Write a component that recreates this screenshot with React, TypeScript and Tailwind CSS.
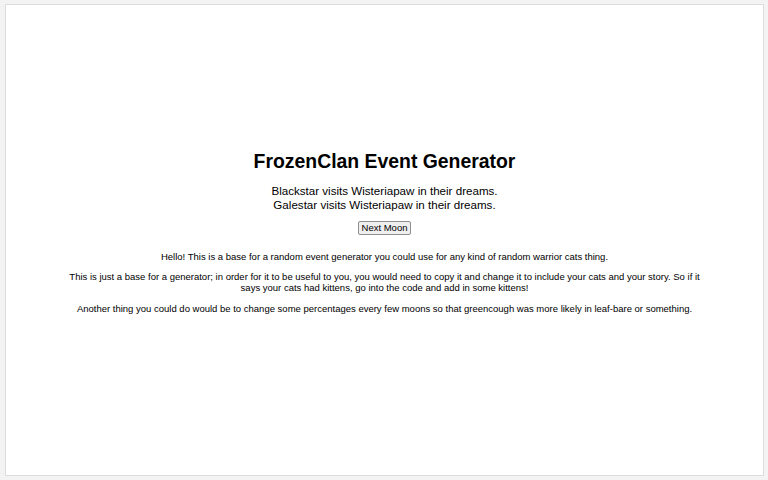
export default function App() {
  const events = [
    'Blackstar visits Wisteriapaw in their dreams.',
    'Galestar visits Wisteriapaw in their dreams.',
  ];

  return (
    <div className="h-[480px] w-[768px] bg-[#f3f3f3] pl-[5px] pr-[4px] pt-[4px] pb-[4px] font-['Liberation_Sans',Arial,sans-serif] text-black">
      <div className="flex h-full flex-col items-center border border-[#dcdcdc] bg-white pt-[145px] text-center">
        <h1 className="text-[19.4px] font-bold leading-[22px]">FrozenClan Event Generator</h1>

        <div className="mt-[12px] text-[11.6px] leading-[14px]">
          {events.map((e, i) => (
            <p key={i}>{e}</p>
          ))}
        </div>

        <button className="mt-[9px] h-[14px] rounded-[2px] border border-[#8f8f8f] bg-[#efefef] px-[3px] text-[9.5px] leading-[12px]">
          Next Moon
        </button>

        <div className="mt-[16px] flex w-[636px] flex-col gap-[9px] text-[9.5px] leading-[11px]">
          <p>Hello! This is a base for a random event generator you could use for any kind of random warrior cats thing.</p>
          <p>
            This is just a base for a generator; in order for it to be useful to you, you would need to copy it and change it to include your cats and your story. So if it says your cats had kittens, go into the code and add in some kittens!
          </p>
          <p className="mt-[1px]">Another thing you could do would be to change some percentages every few moons so that greencough was more likely in leaf-bare or something.</p>
        </div>
      </div>
    </div>
  );
}
